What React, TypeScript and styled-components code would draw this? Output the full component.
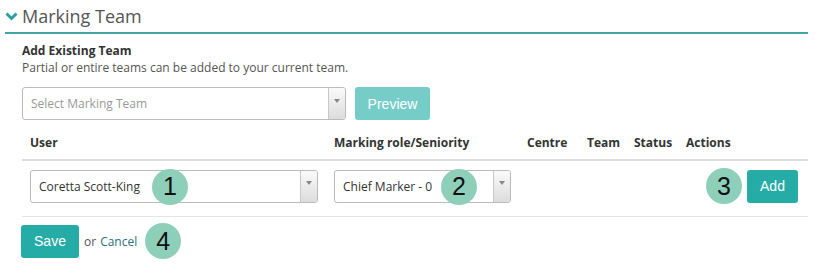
import React from "react";
import styled, { createGlobalStyle } from "styled-components";

const Global = createGlobalStyle`
  html, body { margin: 0; padding: 0; background: #fff; }
  body { font-family: "Open Sans", "Liberation Sans", sans-serif; color: #555; }
`;

const Page = styled.div`
  width: 803px;
  padding-left: 5px;
  padding-top: 0;
`;

const TitleBar = styled.div`
  display: flex;
  align-items: center;
  gap: 4px;
  height: 32px;
  border-bottom: 2px solid #45a3a8;
`;

const Title = styled.h2`
  margin: 0;
  font-size: 18px;
  font-weight: 400;
  color: #555;
  line-height: 26px;
`;

const Body = styled.div`
  padding-left: 17px;
  padding-top: 8px;
`;

const Label = styled.div`
  font-size: 12px;
  font-weight: 700;
  color: #333;
  line-height: 17px;
`;

const Help = styled.div`
  font-size: 12px;
  color: #555;
  line-height: 17px;
`;

const TeamRow = styled.div`
  display: flex;
  gap: 9px;
  margin-top: 11px;
`;

const SelectBox = styled.div<{ $w: number }>`
  position: relative;
  box-sizing: border-box;
  width: ${(p) => p.$w}px;
  height: 33px;
  border: 1px solid #bbb;
  border-radius: 3px;
  display: flex;
  align-items: center;
  background: #fff;
`;

const SelectText = styled.span<{ $placeholder?: boolean }>`
  flex: 1;
  padding-left: 8px;
  font-size: 12px;
  color: ${(p) => (p.$placeholder ? "#999" : "#333")};
`;

const Arrow = styled.span`
  width: 16px;
  align-self: stretch;
  border-left: 1px solid #c8c8c8;
  border-radius: 0 2px 2px 0;
  background: linear-gradient(#fafafa, #dcdcdc);
  display: flex;
  align-items: center;
  justify-content: center;
  &::after {
    content: "";
    border-left: 3px solid transparent;
    border-right: 3px solid transparent;
    border-top: 4px solid #888;
    margin-top: -6px;
  }
`;

const Button = styled.button<{ $light?: boolean; $w: number }>`
  box-sizing: border-box;
  width: ${(p) => p.$w}px;
  height: 33px;
  border: none;
  border-radius: 3px;
  background: ${(p) => (p.$light ? "#76cdc8" : "#26aca6")};
  color: #fff;
  font-family: "Liberation Sans", Arial, sans-serif;
  font-size: 14px;
  padding: 0;
  cursor: pointer;
`;

const cols = "304px 193px 60px 47px 52px 130px";

const HeadRow = styled.div`
  display: grid;
  grid-template-columns: ${cols};
  margin-top: 6px;
  border-bottom: 2px solid #ddd;
`;

const HeadCell = styled.div`
  padding: 8px 8px;
  font-size: 12px;
  font-weight: 700;
  color: #333;
  line-height: 17px;
`;

const DataRow = styled.div`
  display: grid;
  grid-template-columns: ${cols};
  border-bottom: 1px solid #e3e3e3;
  padding: 7px 0 12px;
`;

const Cell = styled.div<{ $end?: boolean }>`
  padding: 0 8px;
  display: flex;
  align-items: center;
  justify-content: ${(p) => (p.$end ? "flex-end" : "flex-start")};
  gap: 5px;
  ${(p) => (p.$end ? "padding-right: 10px;" : "")}
`;

const Badge = styled.span<{ $left?: number }>`
  width: 36px;
  height: 36px;
  border-radius: 50%;
  background: #8ecfba;
  color: #111;
  font-family: "Liberation Sans", Arial, sans-serif;
  font-size: 25px;
  display: inline-flex;
  align-items: center;
  justify-content: center;
  flex-shrink: 0;
  ${(p) =>
    p.$left !== undefined
      ? `position: absolute; left: ${p.$left}px; top: -2px;`
      : ""}
`;

const Footer = styled.div`
  display: flex;
  align-items: center;
  margin-top: 6px;
  margin-left: -1px;
`;

const Or = styled.span`
  font-size: 12px;
  color: #555;
  margin-left: 5px;
`;

const CancelLink = styled.a`
  color: #2b6f78;
  text-decoration: none;
  margin-left: 4px;
`;

const FooterBadge = styled(Badge)`
  margin-left: 8px;
`;

const Chevron = () => (
  <svg width="13" height="10" viewBox="0 0 13 10">
    <path d="M1.5 2.5 L6.5 7.5 L11.5 2.5" fill="none" stroke="#2a9ea0" strokeWidth="3" />
  </svg>
);

export default function App() {
  return (
    <Page>
      <Global />
      <TitleBar>
        <Chevron />
        <Title>Marking Team</Title>
      </TitleBar>
      <Body>
        <Label>Add Existing Team</Label>
        <Help>Partial or entire teams can be added to your current team.</Help>
        <TeamRow>
          <SelectBox $w={324}>
            <SelectText $placeholder>Select Marking Team</SelectText>
            <Arrow />
          </SelectBox>
          <Button $light $w={75}>Preview</Button>
        </TeamRow>
        <HeadRow>
          <HeadCell>User</HeadCell>
          <HeadCell>Marking role/Seniority</HeadCell>
          <HeadCell>Centre</HeadCell>
          <HeadCell>Team</HeadCell>
          <HeadCell>Status</HeadCell>
          <HeadCell>Actions</HeadCell>
        </HeadRow>
        <DataRow>
          <Cell>
            <SelectBox $w={288}>
              <SelectText>Coretta Scott-King</SelectText>
              <Arrow />
              <Badge $left={121}>1</Badge>
            </SelectBox>
          </Cell>
          <Cell>
            <SelectBox $w={177}>
              <SelectText>Chief Marker - 0</SelectText>
              <Arrow />
              <Badge $left={106}>2</Badge>
            </SelectBox>
          </Cell>
          <Cell />
          <Cell />
          <Cell />
          <Cell $end>
            <Badge>3</Badge>
            <Button $w={51}>Add</Button>
          </Cell>
        </DataRow>
        <Footer>
          <Button $w={58}>Save</Button>
          <Or>
            or<CancelLink href="#">Cancel</CancelLink>
          </Or>
          <FooterBadge>4</FooterBadge>
        </Footer>
      </Body>
    </Page>
  );
}
